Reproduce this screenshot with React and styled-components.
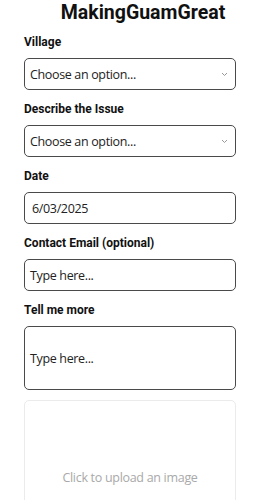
import React from "react";
import styled, { createGlobalStyle } from "styled-components";

const Global = createGlobalStyle`
  html, body { margin: 0; padding: 0; background: #fff; }
  body { font-family: Roboto, "Liberation Sans", sans-serif; color: #111; }
  * { box-sizing: border-box; }
`;

const Page = styled.div`
  width: 261px;
  padding: 0 25px 0 24px;
  display: flex;
  flex-direction: column;
`;

const Title = styled.h1`
  margin: 0;
  padding: 1px 0 0 26px;
  height: 24px;
  font-family: Roboto, sans-serif;
  font-weight: 700;
  font-size: 19.5px;
  line-height: 24px;
  text-align: center;
  color: #111;
  white-space: nowrap;
`;

const Field = styled.div`
  display: flex;
  flex-direction: column;
  margin-top: ${(p) => p.$top ?? 12}px;
`;

const Label = styled.label`
  font-family: Roboto, sans-serif;
  font-weight: 700;
  font-size: 12px;
  line-height: 14px;
  color: #111;
  margin-bottom: 9px;
`;

const Box = styled.div`
  height: ${(p) => p.$h || 32}px;
  border: 1.5px solid #4a4a4a;
  border-radius: 5px;
  display: flex;
  align-items: center;
  justify-content: space-between;
  padding: 0 7px 0 ${(p) => p.$pl || 5}px;
  font-family: "Open Sans", "Noto Sans", sans-serif;
  font-size: 12.5px;
  letter-spacing: -0.35px;
  color: #222;
`;

const Chevron = styled.svg`
  width: 7px;
  height: 5px;
`;

const Upload = styled.div`
  margin-top: 10px;
  height: 110px;
  border: 1.5px solid #ebebeb;
  border-radius: 5px;
  display: flex;
  align-items: flex-start;
  justify-content: center;
  padding-top: 68px;
  font-family: "Open Sans", "Noto Sans", sans-serif;
  font-size: 12.5px;
  letter-spacing: -0.3px;
  line-height: 17px;
  color: #a9a9a9;
`;

const Arrow = () => (
  <Chevron viewBox="0 0 7 5">
    <path d="M1 1 L3.5 3.5 L6 1" fill="none" stroke="#999" strokeWidth="1" />
  </Chevron>
);

export default function App() {
  return (
    <>
      <Global />
      <Page>
        <Title>MakingGuamGreat</Title>
        <Field $top={11}>
          <Label>Village</Label>
          <Box>
            <span>Choose an option...</span>
            <Arrow />
          </Box>
        </Field>
        <Field>
          <Label>Describe the Issue</Label>
          <Box>
            <span>Choose an option...</span>
            <Arrow />
          </Box>
        </Field>
        <Field>
          <Label>Date</Label>
          <Box $pl={7}>
            <span>6/03/2025</span>
          </Box>
        </Field>
        <Field>
          <Label>Contact Email (optional)</Label>
          <Box>
            <span>Type here...</span>
          </Box>
        </Field>
        <Field>
          <Label>Tell me more</Label>
          <Box $h={64}>
            <span>Type here...</span>
          </Box>
        </Field>
        <Upload>Click to upload an image</Upload>
      </Page>
    </>
  );
}
